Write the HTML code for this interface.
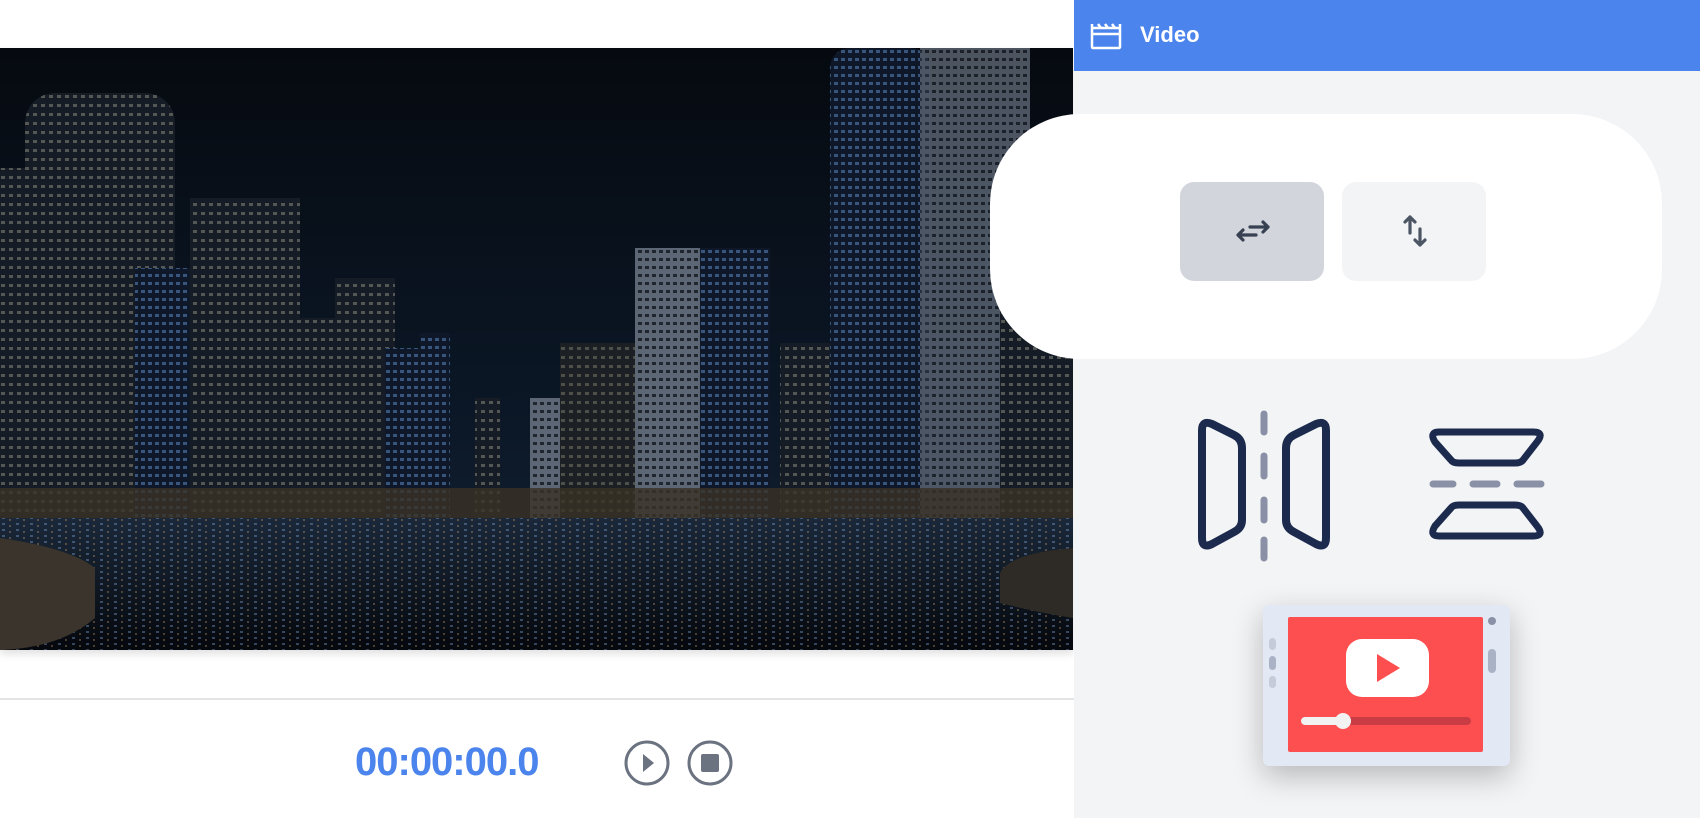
<!DOCTYPE html>
<html><head><meta charset="utf-8"><style>
*{margin:0;padding:0;box-sizing:border-box}
body{width:1700px;height:818px;overflow:hidden;background:#fff;font-family:"Liberation Sans",sans-serif;position:relative}
.side{position:absolute;left:1074px;top:0;width:626px;height:818px;background:#f3f4f6}
.hdr{position:absolute;left:1074px;top:0;width:626px;height:71px;background:#4b84ec;color:#fff}
.hdr span{position:absolute;left:66px;top:22px;font-weight:bold;font-size:22px}
.pill{position:absolute;left:990px;top:114px;width:672px;height:245px;background:#fff;border-radius:90px}
.btn{position:absolute;top:182px;width:144px;height:99px;border-radius:14px}
.vid{position:absolute;left:0;top:48px;width:1073px;height:602px;box-shadow:0 4px 8px rgba(0,0,0,.12)}
.line{position:absolute;left:0;top:698px;width:1074px;height:2px;background:#e3e4e6}
.timer{position:absolute;left:355px;top:740px;font-size:40px;font-weight:bold;color:#4b84ec;letter-spacing:-1px}
.yt{position:absolute;left:1263px;top:605px;width:247px;height:161px;background:#e3e8f5;border-radius:6px;box-shadow:0 10px 30px rgba(0,0,0,.25)}
</style></head><body>
<div class="vid"><svg width="1073" height="602" viewBox="0 0 1073 602">
<defs>
<linearGradient id="sky" x1="0" y1="0" x2="0" y2="1"><stop offset="0" stop-color="#060a10"/><stop offset=".6" stop-color="#0b1726"/><stop offset="1" stop-color="#162434"/></linearGradient>
<linearGradient id="wat" x1="0" y1="0" x2="0" y2="1"><stop offset="0" stop-color="#1a283a"/><stop offset="1" stop-color="#05080d"/></linearGradient>
<pattern id="win" width="8" height="9" patternUnits="userSpaceOnUse"><rect width="8" height="9" fill="#151c26"/><rect x="1" y="2" width="4" height="3" fill="#c9c4a8" opacity=".35"/></pattern>
<pattern id="winb" width="7" height="8" patternUnits="userSpaceOnUse"><rect width="7" height="8" fill="#0f1828"/><rect x="1" y="2" width="4" height="3" fill="#6aa0e8" opacity=".45"/></pattern>
<pattern id="winw" width="7" height="8" patternUnits="userSpaceOnUse"><rect width="7" height="8" fill="#5d6674"/><rect x="1" y="2" width="4" height="3" fill="#20262f"/></pattern>
<pattern id="ref" width="14" height="6" patternUnits="userSpaceOnUse"><rect x="2" y="1" width="3" height="2" fill="#8fb5e8" opacity=".35"/><rect x="9" y="3" width="2" height="2" fill="#e8b87a" opacity=".3"/></pattern>
</defs>
<rect width="1073" height="602" fill="url(#sky)"/>
<rect x="0" y="120" width="70" height="370" fill="url(#win)"/>
<rect x="25" y="45" width="150" height="445" rx="30" fill="url(#win)"/>
<rect x="135" y="220" width="60" height="270" fill="url(#winb)"/>
<rect x="190" y="150" width="110" height="340" fill="url(#win)"/>
<rect x="290" y="270" width="45" height="220" fill="url(#win)"/>
<rect x="335" y="230" width="60" height="260" fill="url(#win)"/>
<rect x="385" y="300" width="35" height="190" fill="url(#winb)"/>
<rect x="420" y="285" width="30" height="205" fill="url(#winb)"/>
<rect x="475" y="350" width="25" height="140" fill="url(#win)"/>
<rect x="530" y="350" width="70" height="120" fill="url(#winw)"/>
<rect x="560" y="295" width="75" height="175" fill="#3a2e20"/><rect x="560" y="295" width="75" height="175" fill="url(#win)" opacity=".8"/>
<rect x="635" y="200" width="85" height="270" fill="url(#winw)"/>
<rect x="700" y="200" width="70" height="270" fill="url(#winb)"/>
<rect x="780" y="295" width="90" height="180" fill="url(#win)"/>
<rect x="830" y="0" width="100" height="490" rx="20" fill="url(#winb)"/>
<rect x="920" y="0" width="110" height="490" fill="url(#winw)" opacity=".8"/>
<rect x="1000" y="250" width="73" height="240" fill="url(#win)"/>
<rect x="0" y="440" width="1073" height="40" fill="#3a3226" opacity=".8"/>
<rect x="0" y="470" width="1073" height="132" fill="url(#wat)"/>
<rect x="0" y="470" width="1073" height="132" fill="url(#ref)"/>
<path d="M0 490 Q70 500 95 520 L95 570 Q60 600 0 602Z" fill="#3a342c"/>
<path d="M1073 500 Q1010 505 1000 525 L1000 555 Q1040 565 1073 570Z" fill="#2e2a26"/>
</svg></div>
<div class="line"></div>
<div class="timer">00:00:00.0</div>
<svg style="position:absolute;left:623px;top:739px" width="110" height="48">
<circle cx="24" cy="24" r="21" fill="none" stroke="#6b7280" stroke-width="3"/><path d="M20 15 L31 24 L20 33Z" fill="#6b7280"/>
<circle cx="87" cy="24" r="21" fill="none" stroke="#6b7280" stroke-width="3"/><rect x="78" y="15" width="18" height="18" rx="2" fill="#6b7280"/>
</svg>
<div class="side"></div>
<div class="hdr"><svg style="position:absolute;left:16px;top:22px" width="32" height="28" viewBox="0 0 32 28" fill="none" stroke="#fff" stroke-width="2.5"><rect x="2" y="6" width="28" height="20" rx="1"/><path d="M2 12H30M2 2V6M8 2l3 4M15 2l3 4M22 2l3 4M30 2v4"/></svg><span>Video</span></div>
<div class="pill"></div>
<div class="btn" style="left:1180px;background:#d3d5dc"><svg style="position:absolute;left:50px;top:27px" width="46" height="46" viewBox="0 0 46 46" fill="none" stroke="#374151" stroke-width="3.2" stroke-linecap="round" stroke-linejoin="round"><path d="M20 18H38M33 13L38 18L33 23M26 26H8M13 21L8 26L13 31"/></svg></div>
<div class="btn" style="left:1342px;background:#f3f4f6"><svg style="position:absolute;left:50px;top:27px" width="46" height="46" viewBox="0 0 46 46" fill="none" stroke="#4b5563" stroke-width="3.2" stroke-linecap="round" stroke-linejoin="round"><path d="M18 8V24M13 13L18 8L23 13M28 20V36M23 31L28 36L33 31"/></svg></div>
<svg style="position:absolute;left:1190px;top:410px" width="150" height="152" viewBox="0 0 150 152" fill="none" stroke-linecap="round" stroke-linejoin="round">
<path d="M12 20 Q12 10 22 14 L44 25 Q52 29 52 38 L52 110 Q52 118 44 122 L22 134 Q12 139 12 128Z" stroke="#1c2a4d" stroke-width="8"/>
<path d="M136 20 Q136 10 126 14 L104 25 Q96 29 96 38 L96 110 Q96 118 104 122 L126 134 Q136 139 136 128Z" stroke="#1c2a4d" stroke-width="8"/>
<path d="M74 4V22M74 46V66M74 90V110M74 130V148" stroke="#8a91a6" stroke-width="7"/>
</svg>
<svg style="position:absolute;left:1425px;top:420px" width="130" height="130" viewBox="0 0 130 130" fill="none" stroke-linecap="round" stroke-linejoin="round">
<path d="M14 12 L108 12 Q120 12 112 22 L98 40 Q96 43 90 43 L34 43 Q28 43 26 40 L10 22 Q4 12 14 12Z" stroke="#1c2a4d" stroke-width="7"/>
<path d="M14 116 L108 116 Q120 116 112 106 L98 88 Q96 85 90 85 L34 85 Q28 85 26 88 L10 106 Q4 116 14 116Z" stroke="#1c2a4d" stroke-width="7"/>
<path d="M8 64H28M48 64H72M92 64H116" stroke="#8a91a6" stroke-width="7"/>
</svg>
<div class="yt"><svg width="247" height="161" viewBox="0 0 247 161">
<rect x="25" y="12" width="195" height="135" rx="2" fill="#fd4f4f"/>
<rect x="83" y="34" width="83" height="58" rx="16" fill="#fff"/>
<path d="M114 49 L137 63 L114 77Z" fill="#fd4f4f"/>
<rect x="38" y="112" width="170" height="8" rx="4" fill="#c93c44"/>
<rect x="38" y="112" width="40" height="8" rx="4" fill="#f2f2f2"/>
<circle cx="80" cy="116" r="8" fill="#f2f2f2"/>
<circle cx="229" cy="16" r="4" fill="#8a91a6"/>
<rect x="225" y="44" width="8" height="24" rx="4" fill="#aab2c6"/>
<rect x="6" y="33" width="7" height="12" rx="3.5" fill="#c5cbd9"/>
<rect x="6" y="51" width="7" height="14" rx="3.5" fill="#aab2c6"/>
<rect x="6" y="71" width="7" height="12" rx="3.5" fill="#c5cbd9"/>
</svg></div>
</body></html>
